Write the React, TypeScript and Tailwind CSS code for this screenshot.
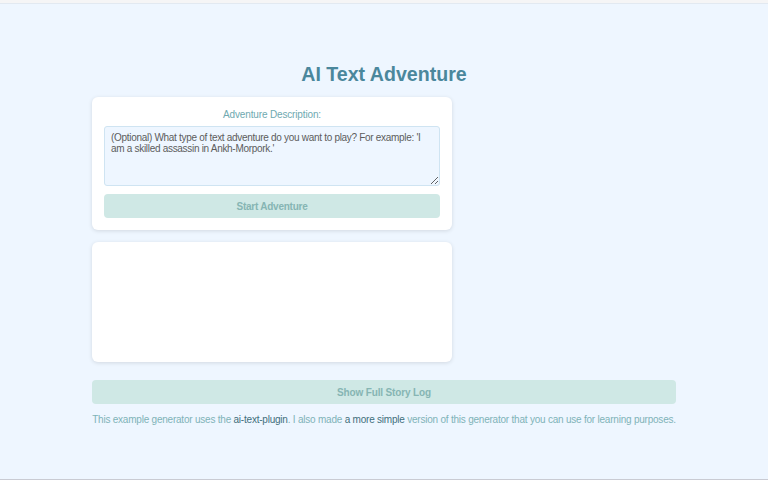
export default function App() {
  return (
    <div className="flex h-[480px] flex-col bg-[#eef6ff] font-['Liberation_Sans',Arial,sans-serif]">
      {/* thin browser-ish strip on top */}
      <div className="h-[4px] border-b border-[#e2e9f1] bg-[#f5f5f6]" />

      <main className="mx-auto flex w-[584px] flex-1 flex-col pt-[58px]">
        <h1 className="text-center text-[19.6px] font-bold leading-[24px] text-[#4a879c]">
          AI Text Adventure
        </h1>

        <div className="mt-[11px] flex w-[360px] flex-col rounded-md bg-white p-3 shadow-[0_1px_4px_rgba(0,0,0,0.12)]">
          <label className="text-center text-[10px] leading-[12px] tracking-[-0.15px] text-[#6fa9b0]">
            Adventure Description:
          </label>
          <textarea
            className="mt-[5px] h-[60px] w-full resize-y rounded-[3px] border border-[#cfe4f2] bg-[#eef6ff] px-[6px] py-[5px] text-[10px] leading-[11px] tracking-[-0.3px] text-[#555] outline-none placeholder:text-[#5c5c5c]"
            placeholder="(Optional) What type of text adventure do you want to play? For example: 'I am a skilled assassin in Ankh-Morpork.'"
          />
          <button className="mt-2 h-6 w-full rounded-[4px] bg-[#cfe8e5] text-[10px] font-bold tracking-[-0.25px] text-[#86b5b3]">
            Start Adventure
          </button>
        </div>

        <div className="mt-3 h-[120px] w-[360px] rounded-md bg-white shadow-[0_1px_4px_rgba(0,0,0,0.12)]" />

        <button className="mt-[18px] h-6 w-full rounded-[4px] bg-[#cfe8e5] text-[10px] font-bold tracking-[-0.15px] text-[#86b5b3]">
          Show Full Story Log
        </button>

        <p className="mt-[10px] whitespace-nowrap text-center text-[10px] leading-[12px] tracking-[-0.22px] text-[#7fb3b8]">
          This example generator uses the <a className="text-[#3f6f7c]">ai-text-plugin</a>. I also made{" "}
          <a className="text-[#3f6f7c]">a more simple</a> version of this generator that you can use for learning
          purposes.
        </p>
      </main>

      <div className="h-px bg-[#c9cbd3]" />
    </div>
  );
}
